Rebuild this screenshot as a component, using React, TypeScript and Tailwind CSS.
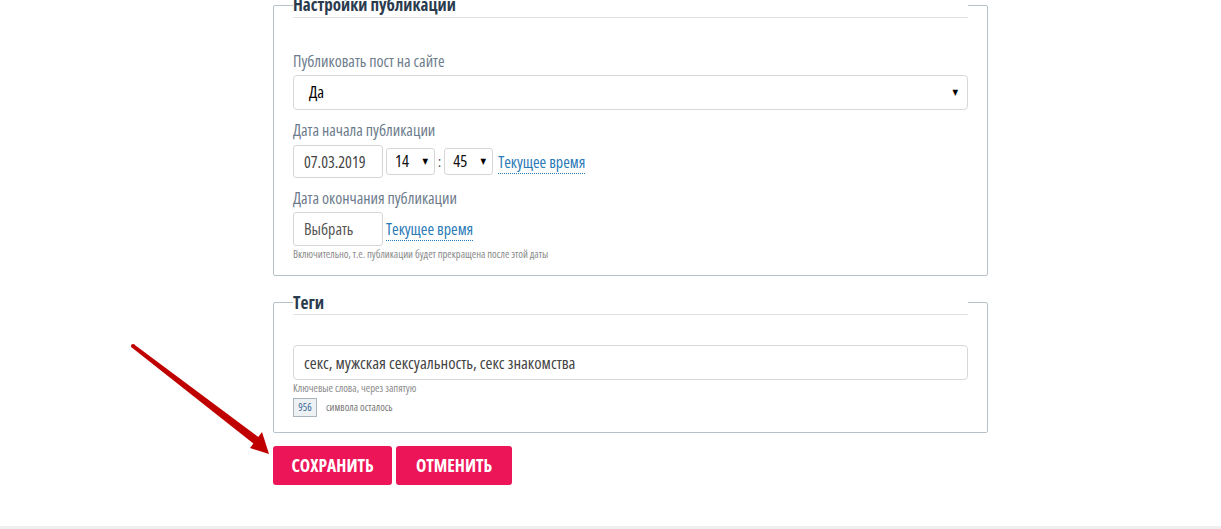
import React from "react";

function Caret() {
  return <span className="font-['DejaVu_Sans'] text-[8px] leading-none text-black">▼</span>;
}

function TimeSelect({ value }: { value: string }) {
  return (
    <div className="flex h-[27px] w-[49px] items-center justify-between rounded-[3px] border border-[#d6d6d6] bg-white pl-[8px] pr-[6px]">
      <span className="text-[16.5px] text-[#111]">{value}</span>
      <Caret />
    </div>
  );
}

function NowLink() {
  return (
    <a href="#" className="border-b border-dotted border-[#2a7ab8] text-[16px] leading-[18px] text-[#2a7ab8]">
      Текущее время
    </a>
  );
}

export default function App() {
  return (
    <div className="relative h-[529px] overflow-hidden bg-white font-['Open_Sans',sans-serif] font-stretch-[75%]">
      <div className="flex h-full flex-col">
        <div className="ml-[273px] w-[715px] -mt-[7px]">
          {/* Настройки публикации */}
          <fieldset className="rounded-[2px] border border-[#b6c2ca] px-[19px] pb-[15px]">
            <legend className="w-full border-b border-[#e2e2e2] text-[17px] font-bold leading-[24px] text-[#2b3b4e]">
              Настройки публикации
            </legend>

            <div className="mt-[34px] text-[16px] leading-[18px] text-[#6d7c8c]">Публиковать пост на сайте</div>
            <div className="mt-[5px] flex h-[35px] items-center justify-between rounded-[4px] border border-[#d8d8d8] pl-[15px] pr-[9px]">
              <span className="text-[16.5px] text-black">Да</span>
              <Caret />
            </div>

            <div className="mt-[11px] text-[16px] leading-[18px] text-[#6d7c8c]">Дата начала публикации</div>
            <div className="mt-[6px] flex items-center">
              <div className="flex h-[33px] w-[90px] items-center rounded-[3px] border border-[#d6d6d6] pl-[10px] text-[16px] text-[#444]">
                07.03.2019
              </div>
              <div className="ml-[3px]">
                <TimeSelect value="14" />
              </div>
              <span className="mx-[3px] text-[14px] text-[#444]">:</span>
              <TimeSelect value="45" />
              <span className="ml-[5px]">
                <NowLink />
              </span>
            </div>

            <div className="mt-[11px] text-[16px] leading-[18px] text-[#6d7c8c]">Дата окончания публикации</div>
            <div className="mt-[5px] flex items-center">
              <div className="flex h-[34px] w-[90px] items-center rounded-[3px] border border-[#d6d6d6] pl-[10px] text-[16px] text-[#555]">
                Выбрать
              </div>
              <span className="ml-[3px]">
                <NowLink />
              </span>
            </div>
            <div className="mt-[2px] text-[10.6px] leading-[12px] text-[#8a8a8a]">
              Включительно, т.е. публикации будет прекращена после этой даты
            </div>
          </fieldset>

          {/* Теги */}
          <fieldset className="mt-[14px] rounded-[2px] border border-[#b6c2ca] px-[19px] pb-[15px]">
            <legend className="w-full border-b border-[#e2e2e2] text-[17.5px] font-bold leading-[24px] text-[#2b3b4e]">
              Теги
            </legend>
            <div className="mt-[30px] flex h-[35px] items-center rounded-[4px] border border-[#d8d8d8] pl-[10px] text-[16.7px] text-[#444]">
              секс, мужская сексуальность, секс знакомства
            </div>
            <div className="mt-[2px] text-[10.7px] leading-[12px] text-[#8a8a8a]">Ключевые слова, через запятую</div>
            <div className="mt-[4px] flex items-center">
              <span className="flex h-[19px] w-[24px] items-center justify-center border border-[#a9b4bc] bg-[#eef1f4] text-[10.5px] text-[#3a6d9a]">
                956
              </span>
              <span className="ml-[9px] text-[10.5px] text-[#777]">символа осталось</span>
            </div>
          </fieldset>

          <div className="mt-[13px] flex gap-[4px]">
            <button className="h-[39px] w-[119px] rounded-[3px] bg-[#ec1558] text-[17.5px] font-bold uppercase text-white">
              Сохранить
            </button>
            <button className="h-[39px] w-[116px] rounded-[3px] bg-[#ec1558] text-[17.5px] font-bold uppercase text-white">
              Отменить
            </button>
          </div>
        </div>

        <div className="mt-auto h-[3px] bg-[#efefef]" />
      </div>

      {/* red pointer arrow */}
      <svg className="pointer-events-none absolute left-0 top-0" width="300" height="529" viewBox="0 0 300 529">
        <circle cx="133" cy="346" r="2" fill="#c00000" />
        <polygon points="134.2,344.4 131.8,347.6 254,444 259,437.5" fill="#c00000" />
        <polygon points="269,454 250,448 262,432" fill="#c00000" />
      </svg>
    </div>
  );
}
